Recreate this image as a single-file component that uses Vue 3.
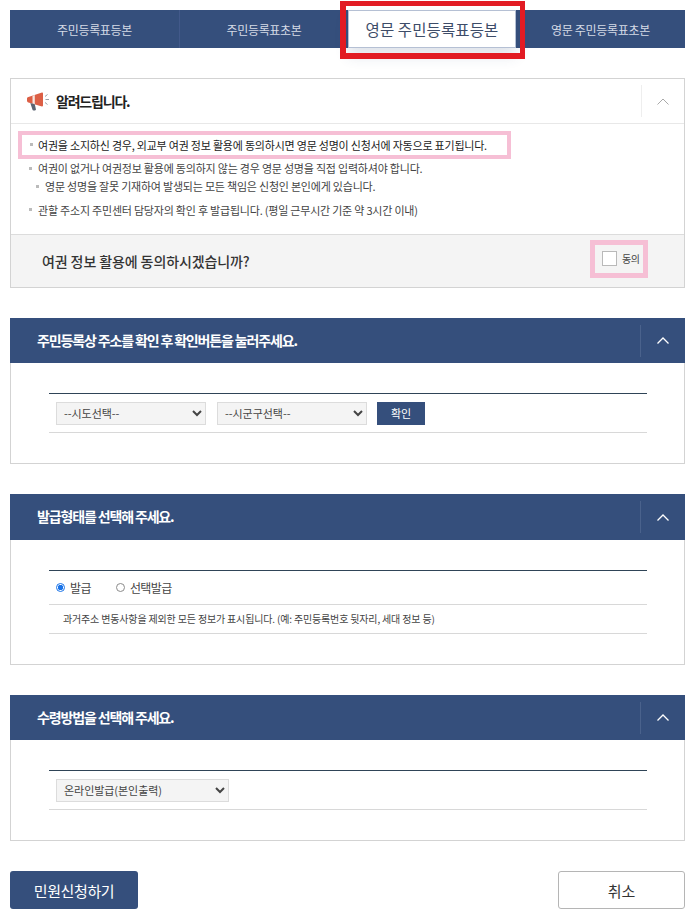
<script setup>
const tabs = [
  { label: '주민등록표등본', active: false },
  { label: '주민등록표초본', active: false },
  { label: '영문 주민등록표등본', active: true },
  { label: '영문 주민등록표초본', active: false }
]
const notices = [
  { text: '여권을 소지하신 경우, 외교부 여권 정보 활용에 동의하시면 영문 성명이 신청서에 자동으로 표기됩니다.', cls: 'marked' },
  { text: '여권이 없거나 여권정보 활용에 동의하지 않는 경우 영문 성명을 직접 입력하셔야 합니다.', cls: 'second' },
  { text: '영문 성명을 잘못 기재하여 발생되는 모든 책임은 신청인 본인에게 있습니다.', cls: 'sub' },
  { text: '관할 주소지 주민센터 담당자의 확인 후 발급됩니다. (평일 근무시간 기준 약 3시간 이내)', cls: 'last' }
]
</script>

<template>
  <div class="page">
    <nav class="tabs">
      <a v-for="t in tabs" :key="t.label" class="tab" :class="{ active: t.active }">
        {{ t.label }}
        <span v-if="t.active" class="red-mark"></span>
      </a>
    </nav>

    <section class="card notice">
      <header class="notice-head">
        <svg class="horn" viewBox="0 0 22 19" width="22" height="19">
          <path d="M0 6.500C0 5.700.6 5 1.400 4.900L15 .6c.6-.2 1 .2 1 .8v12.200c0 .6-.4 1-1 .8L1.400 10.500C.6 10.300 0 9.600 0 8.800z" fill="#dc5f45"/>
          <path d="M5.500 3.700 7.800 3v9.200l-2.300-.7z" fill="#f7e6e0"/>
          <path d="M3.300 11 7.800 12.300l1.100 5c.1.700-.3 1.200-.9 1.200H6.500c-.5 0-.9-.3-1-.8z" fill="#5a6472"/>
          <path d="M18 4.500 20.500 2.500M18.500 7.500H22M18 10.500l2.500 2" stroke="#9aa0a6" stroke-width="1" fill="none"/>
        </svg>
        <h2>알려드립니다.</h2>
        <span class="toggle light">
          <svg viewBox="0 0 12 7" width="12" height="7"><path d="M.5 6.500 6 1l5.500 5.500" fill="none" stroke="#a9a9a9" stroke-width="1"/></svg>
        </span>
      </header>
      <ul class="notes">
        <li v-for="n in notices" :key="n.text" :class="n.cls">{{ n.text }}</li>
      </ul>
      <div class="consent">
        <strong>여권 정보 활용에 동의하시겠습니까?</strong>
        <label class="agree"><span class="box"></span>동의</label>
      </div>
    </section>

    <section class="card block sec-address">
      <header class="block-head">
        <h2>주민등록상 주소를 확인 후 확인버튼을 눌러주세요.</h2>
        <span class="toggle">
          <svg viewBox="0 0 12 7" width="12" height="7"><path d="M.5 6.500 6 1l5.500 5.500" fill="none" stroke="#fff" stroke-width="1.300"/></svg>
        </span>
      </header>
      <div class="body">
        <div class="row">
          <select class="sel w150"><option>--시도선택--</option></select>
          <select class="sel w150"><option>--시군구선택--</option></select>
          <button class="confirm">확인</button>
        </div>
      </div>
    </section>

    <section class="card block sec-type">
      <header class="block-head">
        <h2>발급형태를 선택해 주세요.</h2>
        <span class="toggle">
          <svg viewBox="0 0 12 7" width="12" height="7"><path d="M.5 6.500 6 1l5.500 5.500" fill="none" stroke="#fff" stroke-width="1.300"/></svg>
        </span>
      </header>
      <div class="body">
        <div class="radios">
          <label><span class="radio on"></span>발급</label>
          <label><span class="radio"></span>선택발급</label>
        </div>
        <p class="hint">과거주소 변동사항을 제외한 모든 정보가 표시됩니다. (예: 주민등록번호 뒷자리, 세대 정보 등)</p>
      </div>
    </section>

    <section class="card block sec-receive">
      <header class="block-head">
        <h2>수령방법을 선택해 주세요.</h2>
        <span class="toggle">
          <svg viewBox="0 0 12 7" width="12" height="7"><path d="M.5 6.500 6 1l5.500 5.500" fill="none" stroke="#fff" stroke-width="1.300"/></svg>
        </span>
      </header>
      <div class="body">
        <div class="row">
          <select class="sel w173"><option>온라인발급(본인출력)</option></select>
        </div>
      </div>
    </section>

    <footer class="actions">
      <button class="submit">민원신청하기</button>
      <button class="cancel">취소</button>
    </footer>
  </div>
</template>

<style scoped>
.page { box-sizing: border-box; width: 697px; height: 921px; padding: 10px 12px 0 10px; overflow: hidden; background: #fff; color: #333; font-family: "Noto Sans CJK KR", "Noto Sans", sans-serif; }
.tabs { display: flex; height: 38px; background: #354f7c; }
.tab { position: relative; box-sizing: border-box; width: 170px; display: flex; align-items: center; justify-content: center; color: #d5dbe6; font-size: 12px; letter-spacing: -.3px; border-right: 1px solid #42598a; }
.tab:nth-child(2) { width: 168px; border-right: 0; }
.tab.active { width: 168px; background: #fff; color: #3d4c68; font-size: 15.500px; letter-spacing: .1px; border: 1px solid #b5c0d4; box-shadow: 0 8px 14px rgba(53,79,124,.16); }
.tab:last-child { flex: 1; border-right: 0; }
.red-mark { position: absolute; left: -9px; top: -10px; width: 185px; height: 58px; box-sizing: border-box; border-style: solid; border-color: #e21b23; border-width: 5px 5px 6px 6px; pointer-events: none; }
.card { box-sizing: border-box; border: 1px solid #d3d3d3; background: #fff; }
.notice { height: 210px; margin-top: 30px; }
.notice-head { display: flex; align-items: center; height: 45px; box-sizing: border-box; padding-left: 15px; border-bottom: 1px solid #e8e8e8; }
.notice-head h2 { margin: 0 0 0 7px; font-size: 14px; font-weight: 700; color: #222; letter-spacing: -1.200px; }
.horn { flex: none; margin-left: 1px; }
.toggle { margin-left: auto; display: flex; align-items: center; justify-content: center; width: 44px; height: 32px; border-left: 1px solid #4a628c; }
.toggle.light { width: 42px; border-left-color: #eee; }
.notes { list-style: none; margin: 0; padding: 7px 0 0 7px; height: 110px; box-sizing: border-box; font-size: 11px; letter-spacing: -.21px; color: #444; }
.notes li { position: relative; padding-left: 20px; }
.notes li::before { content: ""; position: absolute; left: 11px; top: 8px; width: 3px; height: 3px; background: #bbb; }
.notes .marked { box-sizing: border-box; width: 493px; height: 28px; line-height: 20px; border: 4px solid #f6bfd5; color: #222; padding-left: 16px; }
.notes .marked::before { left: 8px; }
.notes .second { line-height: 18px; }
.notes .sub { padding-left: 27px; line-height: 19px; }
.notes .sub::before { left: 18px; }
.notes .last { margin-top: 4px; line-height: 20px; }
.consent { box-sizing: border-box; display: flex; align-items: center; height: 53px; padding: 0 36px 0 31px; background: #f4f4f4; border-top: 1px solid #dcdcdc; }
.consent strong { font-size: 14px; font-weight: 500; color: #333; letter-spacing: -.1px; }
.agree { box-sizing: border-box; margin-left: auto; display: flex; align-items: center; gap: 5px; width: 58px; height: 38px; padding-left: 7px; margin-top: -5px; border: 5px solid #f6bfd5; font-size: 10px; letter-spacing: -.4px; color: #444; }
.box { width: 15px; height: 15px; box-sizing: border-box; border: 1px solid #b9b9b9; background: #fff; }
.block { margin-top: 30px; }
.sec-address { height: 146px; }
.sec-type { height: 171px; }
.sec-receive { height: 146px; margin-top: 30px; }
.block-head { box-sizing: border-box; display: flex; align-items: center; height: 45px; margin: -1px -1px 0; padding: 0 0 2px 27px; background: #354f7c; color: #fff; }
.sec-type .block-head { height: 46px; }
.block-head h2 { margin: 0; font-size: 14px; font-weight: 700; letter-spacing: -1.150px; }
.block-head .toggle { margin-bottom: -2px; }
.body { margin: 30px 37px 0 38px; border-top: 1px solid #2f4457; }
.row { box-sizing: border-box; display: flex; align-items: center; gap: 11px; height: 39px; padding-left: 7px; border-bottom: 1px solid #d8d8d8; }
.sel { box-sizing: border-box; height: 23px; padding: 0 3px; background-color: #f4f4f4; border: 1px solid #dcdcdc; font: 11px "Noto Sans CJK KR", sans-serif; letter-spacing: -.05px; color: #444; }
.w150 { width: 150px; }
.w173 { width: 173px; }
.confirm { width: 48px; height: 23px; margin-left: -1px; padding: 0; border: 0; background: #354f7c; color: #fff; font: 11px "Noto Sans CJK KR", sans-serif; }
.radios { box-sizing: border-box; display: flex; gap: 25px; align-items: center; height: 34px; padding-left: 7px; border-bottom: 1px solid #d8d8d8; font-size: 12px; letter-spacing: -.6px; color: #444; }
.radios label { display: flex; align-items: center; gap: 5px; }
.radio { box-sizing: border-box; width: 9px; height: 9px; border: 1px solid #8b8b8b; border-radius: 50%; background: #fff; }
.radio.on { border: 1.500px solid #1a73e8; background: radial-gradient(circle, #1a73e8 0 2.500px, #fff 3px); }
.hint { box-sizing: border-box; margin: 0; height: 29px; line-height: 27px; padding-left: 14px; border-bottom: 1px solid #d8d8d8; font-size: 10px; letter-spacing: -.16px; color: #444; }
.actions { display: flex; justify-content: space-between; margin-top: 30px; }
.actions button { height: 38px; border-radius: 3px; font: 15px "Noto Sans CJK KR", sans-serif; }
.submit { width: 128px; border: 0; background: #354f7c; color: #fff; letter-spacing: -.4px; }
.cancel { width: 127px; border: 1px solid #b5b5b5; background: #fff; color: #333; }
</style>
